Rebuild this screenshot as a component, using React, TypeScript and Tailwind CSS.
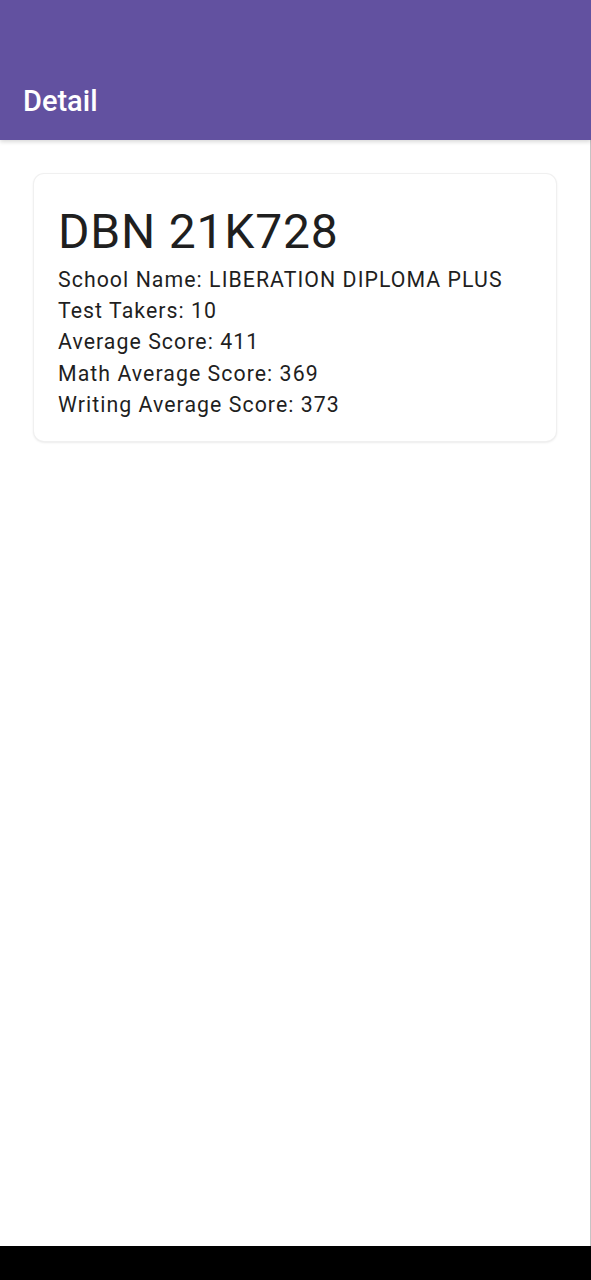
const rows = [
  "School Name: LIBERATION DIPLOMA PLUS",
  "Test Takers: 10",
  "Average Score: 411",
  "Math Average Score: 369",
  "Writing Average Score: 373",
];

export default function App() {
  return (
    <div className="flex h-[1280px] w-[591px] flex-col bg-white font-['Roboto',sans-serif]">
      {/* App bar */}
      <header className="relative z-10 flex h-[140px] shrink-0 items-end bg-[#6251a0] px-[23px] pb-[21px] shadow-[0_2px_4px_rgba(0,0,0,0.15)]">
        <h1 className="text-[29px] font-medium leading-[36px] text-white">Detail</h1>
      </header>

      <main className="flex-1 border-r border-[#c4c4c4] px-[34px] pt-[34px]">
        <div className="rounded-[10px] bg-white px-[24px] pb-[21px] pt-[30px] shadow-[0_1px_3px_rgba(0,0,0,0.16)] ring-1 ring-[#f0f0f0]">
          <h2 className="text-[48px] leading-[56px] tracking-[0.8px] text-[#1f1f1f]">DBN 21K728</h2>
          <div className="mt-[4px] text-[21.3px] leading-[31.2px] tracking-[1.05px] text-[#1f1f1f]">
            {rows.map((r) => (
              <p key={r}>{r}</p>
            ))}
          </div>
        </div>
      </main>

      {/* Nav bar */}
      <div className="h-[34px] shrink-0 bg-black" />
    </div>
  );
}
